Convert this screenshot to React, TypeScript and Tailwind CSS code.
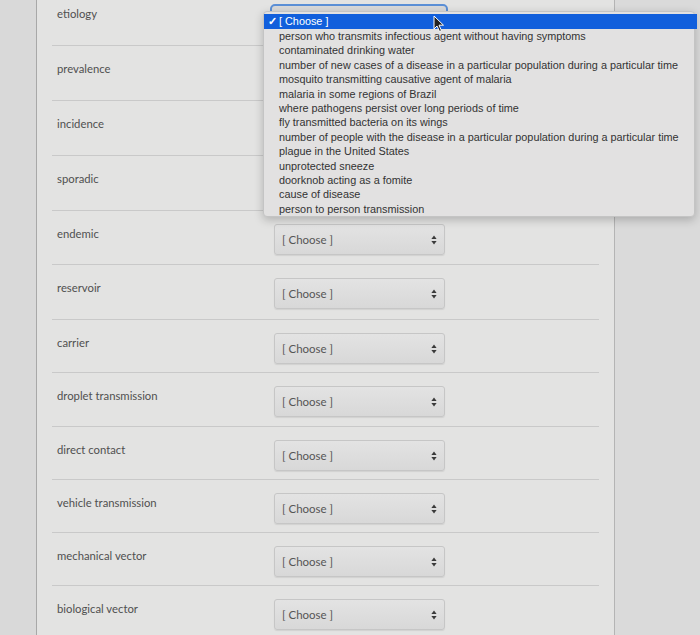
import { Fragment } from 'react';

const terms = [
    { label: 'etiology', h: 'h-[55px]' },
    { label: 'prevalence', h: 'h-[55px]' },
    { label: 'incidence', h: 'h-[55px]' },
    { label: 'sporadic', h: 'h-[55px]' },
    { label: 'endemic', h: 'h-[54px]' },
    { label: 'reservoir', h: 'h-[55px]' },
    { label: 'carrier', h: 'h-[53px]' },
    { label: 'droplet transmission', h: 'h-[54px]' },
    { label: 'direct contact', h: 'h-[53px]' },
    { label: 'vehicle transmission', h: 'h-[53px]' },
    { label: 'mechanical vector', h: 'h-[53px]' },
    { label: 'biological vector', h: 'h-[53px]' },
];

const options = [
    'person who transmits infectious agent without having symptoms',
    'contaminated drinking water',
    'number of new cases of a disease in a particular population during a particular time',
    'mosquito transmitting causative agent of malaria',
    'malaria in some regions of Brazil',
    'where pathogens persist over long periods of time',
    'fly transmitted bacteria on its wings',
    'number of people with the disease in a particular population during a particular time',
    'plague in the United States',
    'unprotected sneeze',
    'doorknob acting as a fomite',
    'cause of disease',
    'person to person transmission',
];

function Arrows() {
    return (
        <svg width="6" height="10" viewBox="0 0 6 10" className="text-[#3a3a3a]">
            <path d="M3 0.5 L5.6 4 H0.4 Z" fill="currentColor" />
            <path d="M3 9.5 L5.6 6 H0.4 Z" fill="currentColor" />
        </svg>
    );
}

// rows hidden under the open list render as plain boxes
function ChooseSelect({ focused, hidden }: { focused?: boolean; hidden?: boolean }) {
    if (focused) {
        return <div className="w-[178px] h-[32px] ml-[218px] mt-[13px] rounded-[5px] border-2 border-[#5b8fd6] bg-[#d9d9d9]" />;
    }
    return (
        <div className="w-[171px] h-[31px] ml-[222px] mt-[13px] rounded-[3px] border border-[#c6c6c6] bg-gradient-to-b from-[#e3e3e3] to-[#d8d8d8] shadow-[0_1px_1px_rgba(0,0,0,0.08)] flex items-center justify-between pl-[7px] pr-[7px]">
            {!hidden && (
                <>
                    <span className="text-[11.5px] text-[#555]">[ Choose ]</span>
                    <Arrows />
                </>
            )}
        </div>
    );
}

function Cursor() {
    return (
        <svg width="12" height="18" viewBox="0 0 12 18" className="absolute left-[433px] top-[15px]">
            <path d="M1 1 L1 14 L4 11 L6.5 16.5 L8.5 15.6 L6 10.2 L10.5 10.2 Z" fill="#222" stroke="#fff" strokeWidth="1" />
        </svg>
    );
}

export default function App() {
    return (
        <div className="relative w-[700px] h-[635px] overflow-hidden bg-[#dedede] font-['Lato',sans-serif]">
            <div className="flex h-full">
                <div className="w-[37px] shrink-0 bg-[#d9d9d9] border-r border-[#a8a8a8]" />
                <div className="w-[578px] shrink-0 bg-[#e3e3e2] border-r border-[#b4b4b4] -mt-[9px]">
                    {terms.map((t, i) => (
                        <Fragment key={t.label}>
                            <div className={`${t.h} flex items-start border-b border-[#c9c9c9] mx-[15px]`}>
                                <div className="w-[0px] shrink-0">
                                    <span className="block whitespace-nowrap pl-[5px] pt-[15px] text-[11.3px] text-[#505050]">
                                        {t.label}
                                    </span>
                                </div>
                                <ChooseSelect focused={i === 0} hidden={i > 0 && i < 4} />
                            </div>
                        </Fragment>
                    ))}
                </div>
                <div className="flex-1 bg-[#dadada]" />
            </div>

            <div className="absolute left-[263px] top-[11px] w-[432px] h-[206px] rounded-[4px] bg-[#e2e1e1] border border-[#c4c4c4] shadow-[0_3px_10px_rgba(0,0,0,0.22)] pt-[2px] font-['Liberation_Sans',Arial,sans-serif] text-[10.85px] leading-[14.4px] text-[#333]">
                <div className="flex items-center h-[15px] bg-[#115fdc] text-white -mr-[3px]">
                    <span className="w-[15px] pl-[4px] text-[11px] font-bold">✓</span>
                    <span>[ Choose ]</span>
                </div>
                {options.map(o => (
                    <div key={o} className="pl-[15px] whitespace-nowrap">
                        {o}
                    </div>
                ))}
            </div>

            <Cursor />
        </div>
    );
}
